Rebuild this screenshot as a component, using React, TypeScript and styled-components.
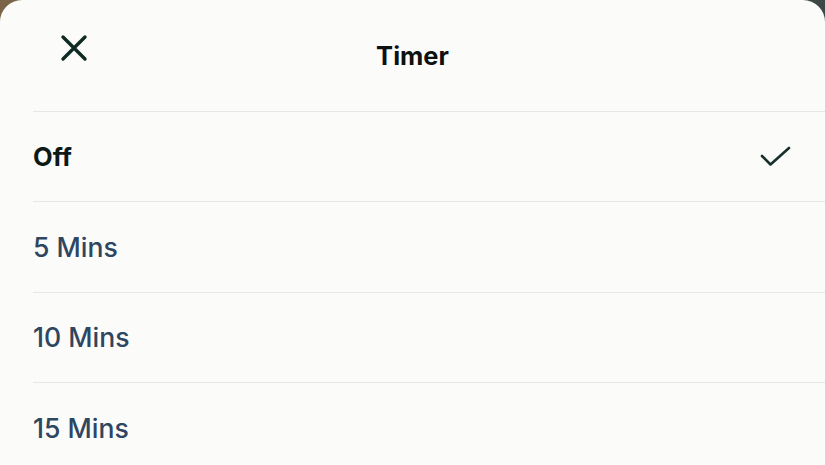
import React, { useState } from 'react';
import styled, { createGlobalStyle } from 'styled-components';

const GlobalStyle = createGlobalStyle`
  html, body {
    margin: 0;
    padding: 0;
    background: linear-gradient(90deg, #7a6548 0%, #5b5a50 50%, #3d4846 100%);
    font-family: Inter, "Liberation Sans", Arial, sans-serif;
  }
`;

const Sheet = styled.div`
  width: 825px;
  height: 465px;
  overflow: hidden;
  background: #fbfbfa;
  border-radius: 22px 22px 0 0;
`;

const Header = styled.header`
  display: grid;
  grid-template-columns: 1fr auto 1fr;
  align-items: center;
  height: 111px;
`;

const CloseButton = styled.button`
  justify-self: start;
  display: flex;
  align-items: center;
  justify-content: center;
  margin: 0 0 15px 56px;
  padding: 4px;
  border: none;
  background: none;
  cursor: pointer;
  color: #0f2a24;
`;

const Title = styled.h1`
  margin: 0;
  font-size: 25.5px;
  font-weight: 700;
  color: #0d110f;
`;

const List = styled.ul`
  list-style: none;
  margin: 0 0 0 33px;
  padding: 0;
`;

const Row = styled.li<{ $selected?: boolean }>`
  box-sizing: border-box;
  display: flex;
  align-items: center;
  justify-content: space-between;
  height: 90.33px;
  padding-right: 34px;
  border-top: 1.5px solid #e7e7e4;
  cursor: pointer;
  font-size: ${p => (p.$selected ? '25.5px' : '26.6px')};
  font-weight: ${p => (p.$selected ? 700 : 500)};
  color: ${p => (p.$selected ? '#0c1917' : '#2f4660')};
`;

const CloseIcon = () => (
  <svg width="28" height="28" viewBox="0 0 28 28" fill="none">
    <path d="M3 3 L25 25 M25 3 L3 25" stroke="currentColor" strokeWidth="3.4" strokeLinecap="round" />
  </svg>
);

const CheckIcon = () => (
  <svg width="31" height="21" viewBox="0 0 31 21" fill="none">
    <polyline points="2,10 10.5,18.5 29,2" stroke="#17302b" strokeWidth="2.6" strokeLinecap="round" strokeLinejoin="round" />
  </svg>
);

const options = ['Off', '5 Mins', '10 Mins', '15 Mins'];

const App: React.FC = () => {
  const [selected, setSelected] = useState('Off');

  return (
    <>
      <GlobalStyle />
      <Sheet>
        <Header>
          <CloseButton aria-label="Close">
            <CloseIcon />
          </CloseButton>
          <Title>Timer</Title>
          <div />
        </Header>
        <List>
          {options.map(opt => (
            <Row key={opt} $selected={opt === selected} onClick={() => setSelected(opt)}>
              <span>{opt}</span>
              {opt === selected && <CheckIcon />}
            </Row>
          ))}
        </List>
      </Sheet>
    </>
  );
};

export default App;
